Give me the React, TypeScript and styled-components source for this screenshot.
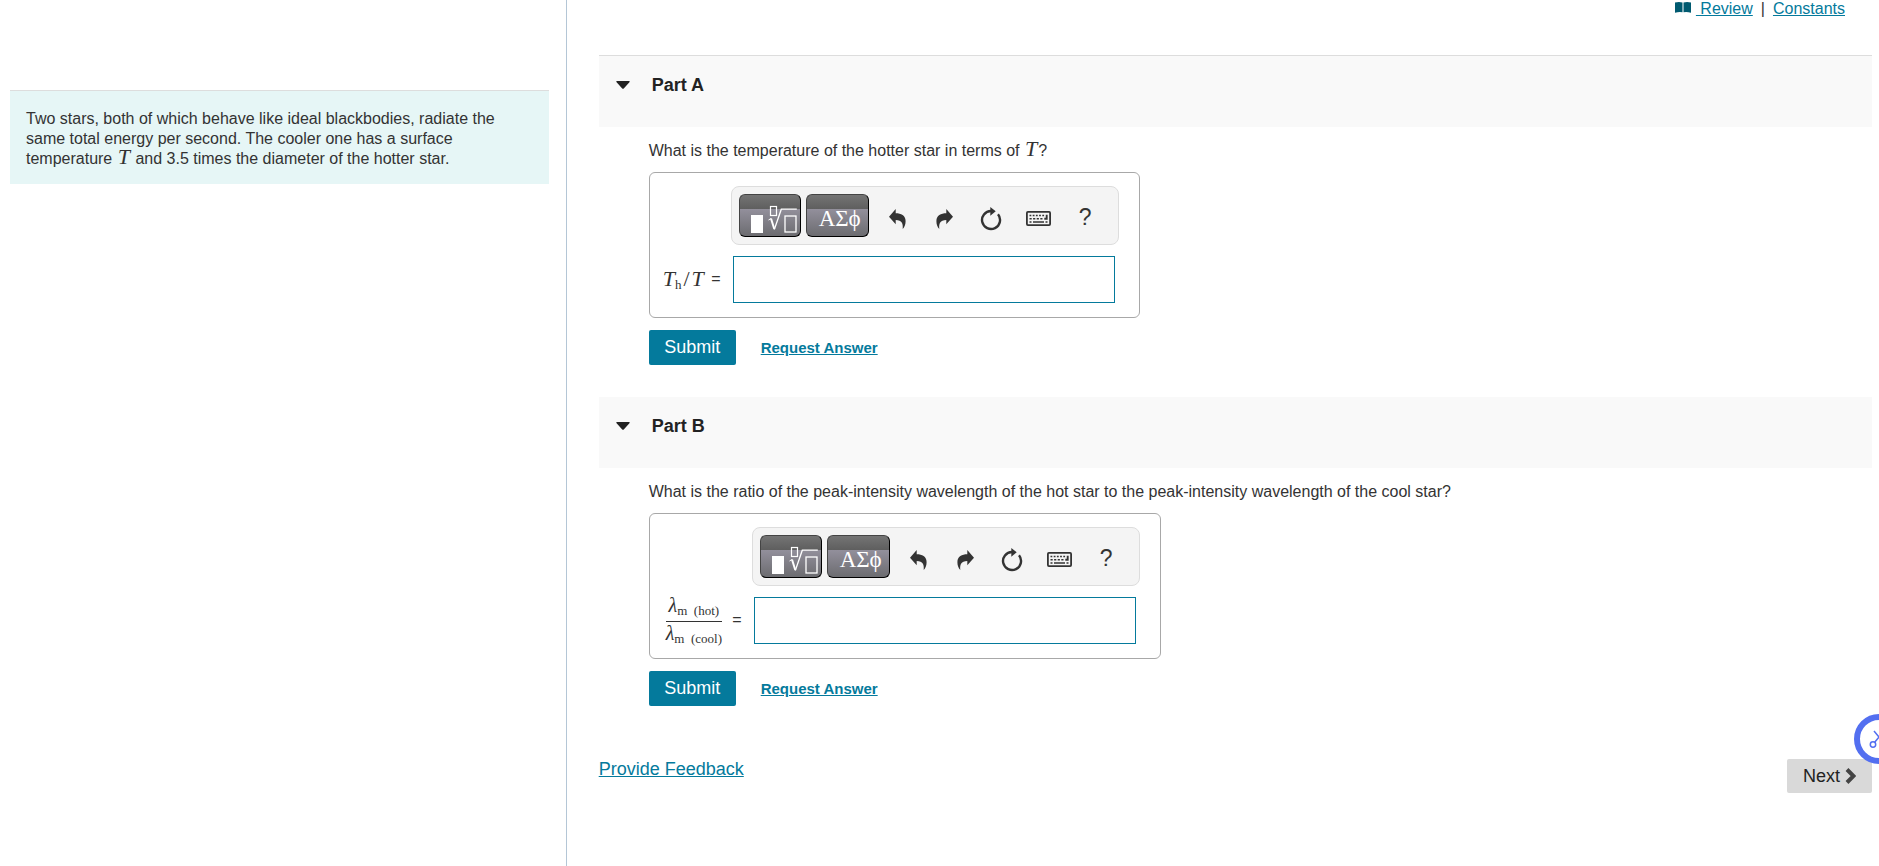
import React from "react";
import styled, { createGlobalStyle } from "styled-components";

const sans = `"Liberation Sans", Arial, Helvetica, sans-serif`;
const serif = `"Liberation Serif", "Times New Roman", serif`;
const teal = "#047a9c";

const GlobalStyle = createGlobalStyle`
  *, *::before, *::after { box-sizing: border-box; }
  body {
    margin: 0;
    background: #fff;
    color: #333;
    font: 16px/20px ${sans};
  }
  p, h2 { margin: 0; }
  button { font-family: inherit; cursor: pointer; }
`;

const Page = styled.div`
  display: flex;
  min-height: 100vh;
`;

const Sidebar = styled.aside`
  flex: 0 0 calc(30% + 3px);
  padding: 90px 17px 0 10px;
  border-right: 1px solid #b4c6d6;
`;

const ProblemCard = styled.section`
  padding: 18px 16px 15px;
  border-top: 1px solid #ddd;
  background: #e6f6f6;
`;

const Main = styled.main`
  flex: 1;
  min-width: 0;
  padding: 0 7px 40px 32px;
`;

const TopLinks = styled.nav`
  display: flex;
  justify-content: flex-end;
  align-items: center;
  height: 55px;
  padding: 0 27px 37px 0;
  line-height: 18px;
`;

const Link = styled.a`
  color: ${teal};
  text-decoration: underline;
  white-space: pre;
`;

const Separator = styled.span`
  padding: 0 8px;
`;

const BookIcon = styled.svg`
  margin: -3px 5px 0 0;
`;

const PartHeader = styled.header<{ $first?: boolean }>`
  display: flex;
  align-items: center;
  padding: 19px 17px 32px;
  border-top: ${(p) => (p.$first ? "1px solid #ddd" : "0")};
  background: #f9f9f9;
`;

const Toggle = styled.button`
  display: flex;
  align-items: center;
  gap: 22px;
  padding: 0;
  border: 0;
  background: none;
  color: #222;
  font-size: 18px;
  font-weight: 700;
  line-height: 20px;
`;

const PartTitle = styled.h2`
  font-size: 18px;
  line-height: 20px;
`;

const PartBody = styled.form`
  padding: 14px 0 32px 50px;
`;

const Question = styled.p`
  margin-bottom: 11px;
`;

const Var = styled.i`
  padding: 0 1px;
  font-family: ${serif};
  font-size: 22px;
  line-height: 16px;
`;

const AnswerBox = styled.div<{ $label: number }>`
  display: grid;
  grid-template-columns: ${(p) => p.$label}px 388px;
  column-gap: 10px;
  row-gap: 11px;
  width: max-content;
  padding: 13px 20px 14px 13px;
  border: 1px solid #a8a8a8;
  border-radius: 6px;
`;

const Toolbar = styled.div`
  grid-column: 2;
  display: flex;
  align-items: center;
  height: 59px;
  padding: 0 7px;
  border: 1px solid #ddd;
  border-radius: 8px;
  background: #f4f4f4;
`;

const PaletteButton = styled.button`
  display: flex;
  align-items: center;
  justify-content: center;
  width: 62px;
  height: 43px;
  margin-right: 5px;
  padding: 0;
  border: 1px solid #000;
  border-top-color: #444;
  border-left-color: #444;
  border-radius: 6px;
  background: linear-gradient(#747474, #5e5e5e 35%, #928f9b 35%, #6c6c70);
  color: #fff;
`;

const GreekButton = styled(PaletteButton)`
  width: 63px;
  padding: 7px 0 0 5px;
  font: 23px/24px ${serif};
`;

const ToolButton = styled.button`
  display: flex;
  align-items: center;
  justify-content: center;
  width: 47px;
  height: 43px;
  padding: 6px 0 0;
  border: 0;
  background: none;
  color: #333;
`;

const HelpButton = styled(ToolButton)`
  padding: 4px 0 0;
  font-size: 23px;
`;

const AnswerLabel = styled.label`
  display: flex;
  align-items: center;
  justify-content: space-between;
  height: 46px;
  white-space: nowrap;
`;

const Formula = styled.span`
  font-family: ${serif};
  font-size: 22px;
  line-height: 24px;
`;

const Slash = styled.span`
  padding: 0 2px;
`;

const Sub = styled.sub`
  font-size: 13px;
  line-height: 12px;
  vertical-align: -3px;
  white-space: pre;
`;

const Fraction = styled.span`
  display: flex;
  flex-direction: column;
  margin-left: 3px;
  font-family: ${serif};
  font-size: 20px;
  line-height: 18px;
  text-align: center;
`;

const Numerator = styled.span`
  padding: 0 2px 4px;
  border-bottom: 1px solid #333;
`;

const Denominator = styled.span`
  padding-top: 2px;
`;

const AnswerInput = styled.input`
  width: 382px;
  height: 47px;
  margin-left: 2px;
  padding: 0 10px;
  border: 1px solid ${teal};
  background: #fff;
  font: 18px ${serif};
`;

const Actions = styled.div`
  display: flex;
  align-items: center;
  gap: 25px;
  margin-top: 12px;
`;

const Submit = styled.button`
  width: 87px;
  height: 35px;
  padding: 0;
  border: 0;
  border-radius: 2px;
  background: ${teal};
  color: #fff;
  font-size: 18px;
`;

const RequestLink = styled(Link)`
  font-size: 15px;
  font-weight: 700;
`;

const Footer = styled.footer`
  display: flex;
  justify-content: space-between;
  align-items: flex-start;
  margin-top: 21px;
  font-size: 18px;
`;

const NextButton = styled.button`
  display: flex;
  align-items: center;
  justify-content: center;
  gap: 5px;
  width: 85px;
  height: 34px;
  padding: 0;
  border: 0;
  border-radius: 2px;
  background: #d9d9d9;
  color: #222;
  font-size: 18px;
`;

const FloatingButton = styled.button`
  position: fixed;
  right: -25px;
  bottom: 102px;
  width: 50px;
  height: 50px;
  padding: 0;
  border: 6px solid #536ff0;
  border-radius: 50%;
  background: #fff;
`;

const arrow =
  "M0 7.7 6.7 0v4.3C12 4.3 16.6 6.5 16.6 12c0 3.5-1 6-2.9 8C14.2 14.5 13 11 6.7 11v4.2z";

const UndoIcon = () => (
  <svg width="17" height="20" viewBox="0 0 17 20" aria-hidden="true">
    <path d={arrow} fill="currentColor" />
  </svg>
);

const RedoIcon = () => (
  <svg width="17" height="20" viewBox="0 0 17 20" aria-hidden="true">
    <path d={arrow} fill="currentColor" transform="matrix(-1 0 0 1 17 0)" />
  </svg>
);

const ResetIcon = () => (
  <svg width="22" height="24" viewBox="0 0 22 24" aria-hidden="true">
    <path d="M18 7.3A9 9 0 1 1 11 4" fill="none" stroke="currentColor" strokeWidth="2.4" />
    <path d="M10.3 0l5.4 4.3-5.4 4.4z" fill="currentColor" />
  </svg>
);

const KeyboardIcon = () => (
  <svg width="25" height="15" viewBox="0 0 25 15" aria-hidden="true">
    <rect x="0.9" y="0.9" width="23.2" height="13.2" rx="1" fill="none" stroke="currentColor" strokeWidth="1.8" />
    <g stroke="currentColor" strokeWidth="1.6" fill="none">
      <path d="M3.5 4.5h16" strokeDasharray="1.8 1.4" />
      <path d="M3.5 7.7h14" strokeDasharray="2.2 1.4" />
      <path d="M20.7 3.7v4h-2.4" strokeWidth="1.9" />
      <path d="M3.5 11h2M7 11h11M19.5 11h2" />
    </g>
  </svg>
);

const TemplateIcon = () => (
  <svg width="60" height="41" viewBox="1 1 60 41" aria-hidden="true">
    <rect x="12" y="21" width="12" height="18" fill="#fff" />
    <g fill="none" stroke="#fff">
      <rect x="31.5" y="12.5" width="6" height="9" strokeWidth="1.2" />
      <rect x="46" y="22" width="11" height="16" strokeWidth="1.3" />
      <path d="M29.5 26l2.500-1.5" />
      <path d="M32 24.5l3.3 10.500" strokeWidth="2" />
      <path d="M35.3 35.5l7-20.3h15.5" strokeWidth="1.3" />
    </g>
  </svg>
);

const Caret = () => (
  <svg width="14" height="8" viewBox="0 0 14 8" aria-hidden="true">
    <path d="M1 0h12q1.5 0 .4 1.2L8 7.3q-1 1-2 0L.6 1.2Q-.5 0 1 0z" fill="#222" />
  </svg>
);

interface PartProps {
  id: string;
  title: string;
  first?: boolean;
  question: React.ReactNode;
  label: React.ReactNode;
  labelWidth: number;
}

function Part({ id, title, first, question, label, labelWidth }: PartProps) {
  return (
    <section>
      <PartHeader $first={first}>
        <Toggle type="button" aria-expanded="true">
          <Caret />
          <PartTitle>{title}</PartTitle>
        </Toggle>
      </PartHeader>
      <PartBody onSubmit={(e) => e.preventDefault()}>
        <Question>{question}</Question>
        <AnswerBox $label={labelWidth}>
          <Toolbar role="toolbar" aria-label="Equation tools">
            <PaletteButton type="button" aria-label="Templates">
              <TemplateIcon />
            </PaletteButton>
            <GreekButton type="button">ΑΣϕ</GreekButton>
            <ToolButton type="button" aria-label="Undo"><UndoIcon /></ToolButton>
            <ToolButton type="button" aria-label="Redo"><RedoIcon /></ToolButton>
            <ToolButton type="button" aria-label="Reset"><ResetIcon /></ToolButton>
            <ToolButton type="button" aria-label="Keyboard shortcuts"><KeyboardIcon /></ToolButton>
            <HelpButton type="button">?</HelpButton>
          </Toolbar>
          <AnswerLabel htmlFor={id}>
            {label}
            <span>=</span>
          </AnswerLabel>
          <AnswerInput id={id} type="text" />
        </AnswerBox>
        <Actions>
          <Submit type="submit">Submit</Submit>
          <RequestLink href="#request">Request Answer</RequestLink>
        </Actions>
      </PartBody>
    </section>
  );
}

export default function App() {
  return (
    <>
      <GlobalStyle />
      <Page>
        <Sidebar>
          <ProblemCard>
            <p>
              Two stars, both of which behave like ideal blackbodies, radiate the same total
              energy per second. The cooler one has a surface temperature <Var>T</Var> and 3.5
              times the diameter of the hotter star.
            </p>
          </ProblemCard>
        </Sidebar>
        <Main>
          <TopLinks>
            <BookIcon width="16" height="11" viewBox="0 0 16 11" aria-hidden="true">
              <path d="M0 .6Q4-.4 7.5.6V10.2Q4 9.500 0 10.700zM8.500.6Q12-.4 16 .6v10.100Q12 9.500 8.500 10.200z" fill="#005a70" />
            </BookIcon>
            <Link href="#review"> Review</Link>
            <Separator>|</Separator>
            <Link href="#constants">Constants</Link>
          </TopLinks>
          <Part
            first
            id="answer-a"
            title="Part A"
            labelWidth={58}
            question={<>What is the temperature of the hotter star in terms of <Var>T</Var>?</>}
            label={
              <Formula>
                <i>T</i>
                <Sub>h</Sub>
                <Slash>/</Slash>
                <i>T</i>
              </Formula>
            }
          />
          <Part
            id="answer-b"
            title="Part B"
            labelWidth={79}
            question="What is the ratio of the peak-intensity wavelength of the hot star to the peak-intensity wavelength of the cool star?"
            label={
              <Fraction>
                <Numerator><i>λ</i><Sub>m  (hot)</Sub></Numerator>
                <Denominator><i>λ</i><Sub>m  (cool)</Sub></Denominator>
              </Fraction>
            }
          />
          <Footer>
            <Link href="#feedback">Provide Feedback</Link>
            <NextButton type="button">
              Next
              <svg width="11" height="16" viewBox="0 0 11 16" aria-hidden="true">
                <path d="M2 1.5L8.500 8 2 14.5" fill="none" stroke="#444" strokeWidth="4" />
              </svg>
            </NextButton>
          </Footer>
        </Main>
      </Page>
      <FloatingButton type="button" aria-label="Snip">
        <svg width="38" height="38" viewBox="0 0 38 38" fill="none" stroke="#536ff0" strokeWidth="1.5" aria-hidden="true">
          <circle cx="13" cy="24.5" r="2.7" />
          <circle cx="25" cy="24.5" r="2.7" />
          <path d="M14 11l9.3 11.2M24 11l-9.3 11.2" />
        </svg>
      </FloatingButton>
    </>
  );
}
